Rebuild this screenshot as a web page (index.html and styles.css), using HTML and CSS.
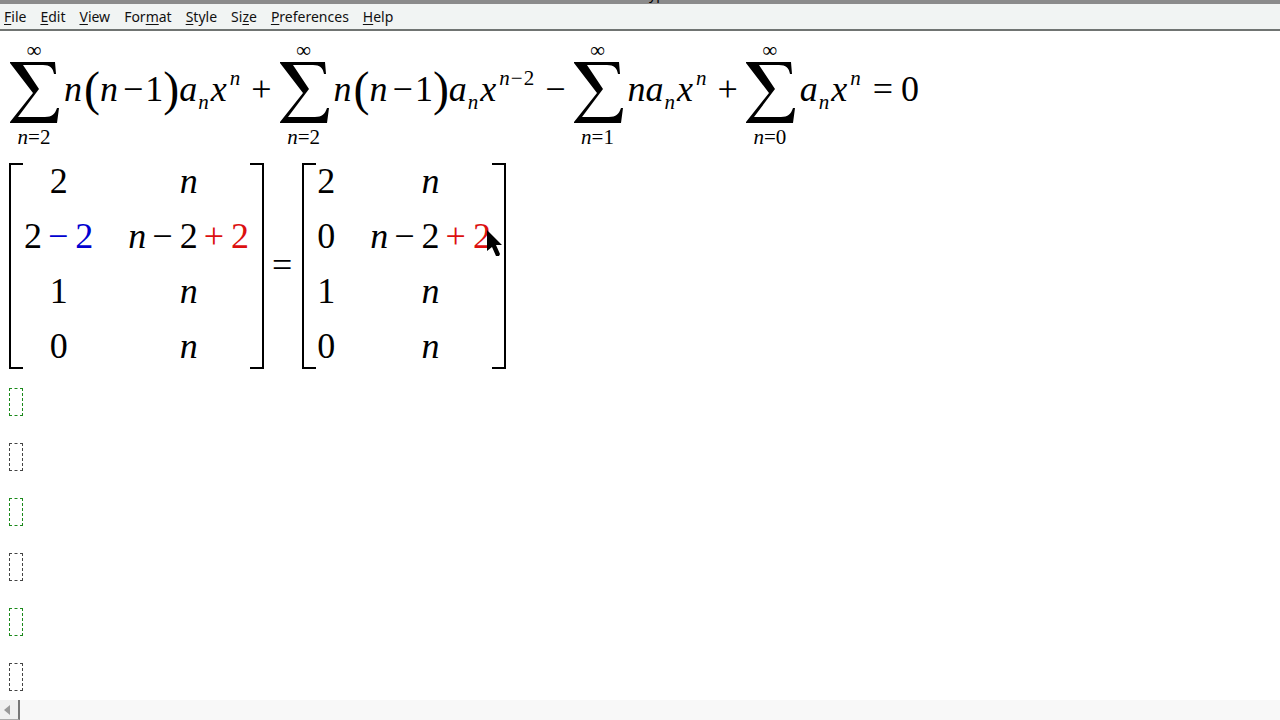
FILE: index.html
```html
<!DOCTYPE html>
<html lang="en">
<head>
    <meta charset="UTF-8">
    <title>MathType</title>
    <link rel="stylesheet" href="styles.css">
</head>
<body>
<svg class="defs" aria-hidden="true">
    <symbol id="sigma" viewBox="0 0 50 61">
        <path d="M1 0H46L47 12H45C44 6 41 3 34 3H14L30 27L9 55H36C43 55 46 52 48 46H50L48 61H1V60L24 31L1 1Z"/>
    </symbol>
</svg>

<header class="titlebar"><span>MathType</span></header>
<nav class="menu">
    <button><u>F</u>ile</button>
    <button><u>E</u>dit</button>
    <button><u>V</u>iew</button>
    <button>For<u>m</u>at</button>
    <button><u>S</u>tyle</button>
    <button>Si<u>z</u>e</button>
    <button><u>P</u>references</button>
    <button><u>H</u>elp</button>
</nav>

<main class="sheet">
    <div class="equation">
        <div class="sum"><span class="upper">∞</span><svg><use href="#sigma"/></svg><span><i>n</i>=2</span></div>
        <div class="expr">
            <i>n</i><span class="open">(</span><i>n</i><span class="op-in">−</span><span>1</span><span class="close">)</span>
            <span><i>a</i><sub>n</sub><i>x</i><sup><i>n</i></sup></span><span class="op-sum">+</span>
        </div>
        <div class="sum"><span class="upper">∞</span><svg><use href="#sigma"/></svg><span><i>n</i>=2</span></div>
        <div class="expr">
            <i>n</i><span class="open">(</span><i>n</i><span class="op-in">−</span><span>1</span><span class="close">)</span>
            <span><i>a</i><sub>n</sub><i>x</i><sup><i>n</i><span class="op-sup">−</span>2</sup></span><span class="op-sum">−</span>
        </div>
        <div class="sum"><span class="upper">∞</span><svg><use href="#sigma"/></svg><span><i>n</i>=1</span></div>
        <div class="expr">
            <span><i>na</i><sub>n</sub><i>x</i><sup><i>n</i></sup></span><span class="op-sum">+</span>
        </div>
        <div class="sum"><span class="upper">∞</span><svg><use href="#sigma"/></svg><span><i>n</i>=0</span></div>
        <div class="expr">
            <span><i>a</i><sub>n</sub><i>x</i><sup><i>n</i></sup></span><span class="op-eq">=</span><span>0</span>
        </div>
    </div>

    <div class="equation">
        <div class="matrix">
            <span>2</span><i>n</i>
            <span>2<span class="blue"><span class="op">−</span>2</span></span>
            <span><i>n</i><span class="op">−</span>2<span class="red"><span class="op">+</span>2</span></span>
            <span>1</span><i>n</i>
            <span>0</span><i>n</i>
        </div>
        <span class="equals">=</span>
        <div class="matrix">
            <span>2</span><i>n</i>
            <span>0</span>
            <span class="pointed"><i>n</i><span class="op">−</span>2<span class="red"><span class="op">+</span>2</span>
                <svg class="cursor" viewBox="0 0 16 28"><path d="M1 1V22L6 18L10 27H13L14 25L10 16H16Z"/></svg>
            </span>
            <span>1</span><i>n</i>
            <span>0</span><i>n</i>
        </div>
    </div>

    <div class="slots">
        <input type="text" aria-label="Line 3">
        <input type="text" aria-label="Line 4">
        <input type="text" aria-label="Line 5">
        <input type="text" aria-label="Line 6">
        <input type="text" aria-label="Line 7">
        <input type="text" aria-label="Line 8">
    </div>
</main>

<footer class="scrollbar">
    <button aria-label="Scroll left"><svg viewBox="0 0 6 10"><path d="M6 0V10L0 5Z"/></svg></button>
</footer>
</body>
</html>
```
FILE: styles.css
```css
* {
    box-sizing: border-box;
}

body {
    margin: 0;
    height: 100vh;
    display: flex;
    flex-direction: column;
    overflow: hidden;
    background: #fff;
    color: #000;
    font-family: "Liberation Serif", serif;
}

.defs {
    display: none;
}

.titlebar {
    flex: none;
    height: 4px;
    display: flex;
    justify-content: center;
    align-items: flex-end;
    overflow: hidden;
    background: #8b8b8b;
    font: 14px/20px "Noto Sans", sans-serif;
}

.menu {
    flex: none;
    display: flex;
    gap: 14px;
    height: 27px;
    padding: 0 4px;
    background: #f1f4f3;
    border-bottom: 2px solid #707472;
}

.menu button {
    padding: 0;
    border: 0;
    background: none;
    color: #111;
    font: 14px/24px "Noto Sans", sans-serif;
}

.menu u {
    text-underline-offset: 2px;
}

.sheet {
    flex: 1;
    min-height: 0;
    overflow: hidden;
    padding: 5px 8px 0;
}

.equation {
    display: flex;
    align-items: center;
    margin-bottom: 14px;
    font-size: 36px;
    line-height: 40px;
}

.sum {
    width: 52px;
    display: flex;
    flex-direction: column;
    align-items: center;
    gap: 2px;
    font-size: 21px;
    line-height: 24px;
}

.sum svg {
    width: 50px;
    height: 61px;
}

.upper {
    padding-top: 4px;
    line-height: 20px;
}

.expr {
    display: flex;
    align-items: center;
    padding: 0 0 7px 4px;
}

.open, .close {
    font-size: 48px;
}

.open {
    margin-left: 2px;
}

sub, sup {
    font-size: 21px;
    line-height: 0;
}

sub {
    font-style: italic;
    vertical-align: -8px;
    margin: 0 2px 0 1px;
}

sup {
    vertical-align: 16px;
    margin-left: 3px;
}

.op {
    margin: 0 7px 0 6px;
}

.op-in {
    margin: 0 2px 0 5px;
}

.op-sup {
    margin: 0 1px;
}

.op-sum {
    margin: 0 6px 0 11px;
}

.op-eq {
    margin: 0 8px 0 12px;
}

/* brackets are drawn on both sides with partial borders */
.matrix {
    position: relative;
    display: grid;
    grid-template-columns: auto auto;
    column-gap: 35px;
    row-gap: 19px;
    justify-items: center;
    padding: 0 15px 5px;
    line-height: 36px;
    margin-left: 1px;
}

.matrix:before, .matrix:after {
    content: '';
    position: absolute;
    top: 0;
    bottom: 0;
    width: 12px;
    border: 2px solid #000;
}

.matrix:before {
    left: 0;
    border-right: 0;
}

.matrix:after {
    right: 0;
    border-left: 0;
}

.equals {
    padding-bottom: 2px;
    margin: 0 9px 0 8px;
}

.blue {
    color: #0000d0;
}

.red {
    color: #dc1010;
}

.pointed {
    position: relative;
}

.cursor {
    position: absolute;
    right: -11px;
    top: 11px;
    width: 16px;
    height: 28px;
}

.slots {
    display: flex;
    flex-direction: column;
    gap: 27px;
    margin: 19px 0 0 1px;
}

.slots input {
    width: 14px;
    height: 28px;
    padding: 0;
    border: 1px dashed #444;
    background: none;
}

.slots input:nth-child(odd) {
    border-color: #1a8a1a;
}

.scrollbar {
    flex: none;
    height: 20px;
    background: #f8f8f8;
}

.scrollbar button {
    width: 20px;
    height: 20px;
    padding: 0 4px 0 0;
    border: 0;
    border-right: 2px solid #777;
    border-bottom: 1px solid #aaa;
    background: #f0f0f0;
}

.scrollbar svg {
    display: block;
    width: 6px;
    height: 10px;
    margin: 0 auto;
    fill: #999;
}
```
